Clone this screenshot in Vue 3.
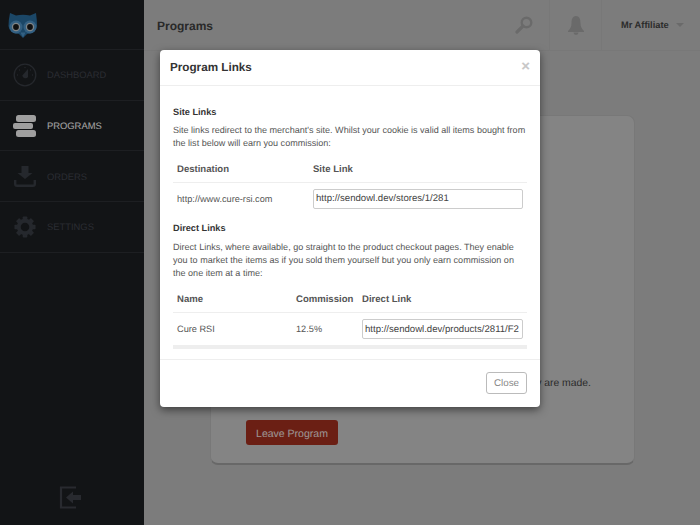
<script setup>
const navItems = [
  { label: 'DASHBOARD', icon: 'gauge' },
  { label: 'PROGRAMS', icon: 'stack', active: true },
  { label: 'ORDERS', icon: 'tray' },
  { label: 'SETTINGS', icon: 'gear' },
]
const teeth = [0, 45, 90, 135, 180, 225, 270, 315]
</script>

<template>
  <div class="page">
    <aside class="sidebar">
      <div class="logo">
        <svg width="30" height="26" viewBox="0 0 30 26">
          <path d="M2 1 L8 3.500 Q15 2 22 3.500 L28 1 Q29 8 29 14 Q28 21 19 22 L15 26 L11 22 Q1 21 .5 14 Q.5 8 2 1Z" fill="#2a6d9e" />
          <circle cx="8" cy="15" r="6.500" fill="#4f94c8" />
          <circle cx="22" cy="15" r="6.500" fill="#4f94c8" />
          <circle cx="8" cy="15" r="4.200" fill="#c4ccd0" />
          <circle cx="22" cy="15" r="4.200" fill="#c4ccd0" />
          <circle cx="8" cy="15" r="2.900" fill="#1a1a1a" />
          <circle cx="22" cy="15" r="2.900" fill="#1a1a1a" />
          <path d="M12.500 20.500 L17.500 20.500 L15 25.500Z" fill="#4f94c8" />
        </svg>
      </div>
      <nav class="nav">
        <a v-for="item in navItems" :key="item.label" class="nav-item" :class="{ active: item.active }">
          <span class="nav-icon">
            <svg v-if="item.icon === 'gauge'" width="24" height="24" viewBox="0 0 24 24">
              <circle cx="12" cy="12" r="10.800" fill="none" stroke="currentColor" stroke-width="1.300" />
              <path d="M15 6 L15 14 A3.200 3.200 0 0 1 9.300 12.500 Z" fill="currentColor" />
              <g fill="currentColor">
                <circle cx="12" cy="4.500" r=".7" /><circle cx="6.500" cy="7" r=".7" /><circle cx="4.500" cy="12" r=".7" /><circle cx="17.500" cy="7" r=".7" /><circle cx="19.500" cy="12" r=".7" />
              </g>
            </svg>
            <svg v-else-if="item.icon === 'stack'" width="24" height="22" viewBox="0 0 24 22">
              <g fill="currentColor">
                <rect x="3" y="0" width="20" height="7" rx="2.500" />
                <rect x="0" y="8" width="20" height="6" rx="2" />
                <rect x="3" y="15" width="20" height="7" rx="2.500" />
              </g>
            </svg>
            <svg v-else-if="item.icon === 'tray'" width="22" height="21" viewBox="0 0 22 21">
              <g fill="currentColor">
                <path d="M7.500 0 H14.500 V7 H18.500 L11 13 L3.500 7 H7.500 Z" />
              </g>
              <path d="M1.200 14 V18 Q1.200 19.800 3 19.800 H19 Q20.800 19.800 20.800 18 V14" fill="none" stroke="currentColor" stroke-width="2.400" />
            </svg>
            <svg v-else width="22" height="22" viewBox="0 0 24 24">
              <g fill="currentColor">
                <rect v-for="a in teeth" :key="a" x="9.500" y=".5" width="5" height="5" rx=".8" :transform="`rotate(${a} 12 12)`" />
              </g>
              <circle cx="12" cy="12" r="6.800" fill="none" stroke="currentColor" stroke-width="4.200" />
            </svg>
          </span>
          <span class="nav-label">{{ item.label }}</span>
        </a>
      </nav>
      <div class="logout">
        <svg width="23" height="23" viewBox="0 0 23 23">
          <path d="M17 1.500 H2 V21.500 H17" fill="none" stroke="#3e4149" stroke-width="2.200" />
          <path d="M7 11.500 L14 5.500 V9 H22 V14 H14 V17.500 Z" fill="#3e4149" />
        </svg>
      </div>
    </aside>

    <main class="main">
      <header class="topbar">
        <h1 class="page-title">Programs</h1>
        <div class="top-cell search-cell">
          <svg width="18" height="18" viewBox="0 0 18 18">
            <circle cx="11.500" cy="6.500" r="4.800" fill="none" stroke="#a4a4a4" stroke-width="2.400" />
            <path d="M8 10 L2 16" stroke="#a4a4a4" stroke-width="3.200" stroke-linecap="round" />
          </svg>
        </div>
        <div class="top-cell bell-cell">
          <svg width="18" height="19" viewBox="0 0 18 19">
            <path d="M9 0 C5 0 4.500 4 4.500 7 C4.500 11 3 13 1 15 V16 H17 V15 C15 13 13.500 11 13.500 7 C13.500 4 13 0 9 0Z" fill="#a4a4a4" />
            <path d="M6.500 16.500 A2.500 2.500 0 0 0 11.500 16.500Z" fill="#a4a4a4" />
          </svg>
        </div>
        <div class="user">Mr Affiliate<span class="caret"></span></div>
      </header>
      <section class="card">
        <p class="card-text">y are made.</p>
        <button class="leave">Leave Program</button>
      </section>
    </main>

    <div class="overlay">
      <div class="modal">
        <div class="modal-head">
          <h3 class="modal-title">Program Links</h3>
          <span class="close-x">×</span>
        </div>
        <div class="modal-body">
          <h4 class="section-title">Site Links</h4>
          <p class="copy">Site links redirect to the merchant's site. Whilst your cookie is valid all items bought from the list below will earn you commission:</p>
          <table class="links site">
            <thead>
              <tr><th class="c-dest">Destination</th><th>Site Link</th></tr>
            </thead>
            <tbody>
              <tr>
                <td>http://www.cure-rsi.com</td>
                <td><input class="link-input" readonly value="http://sendowl.dev/stores/1/281" /></td>
              </tr>
            </tbody>
          </table>
          <h4 class="section-title second">Direct Links</h4>
          <p class="copy second-copy">Direct Links, where available, go straight to the product checkout pages. They enable you to market the items as if you sold them yourself but you only earn commission on the one item at a time:</p>
          <table class="links direct">
            <thead>
              <tr><th class="c-name">Name</th><th class="c-comm">Commission</th><th>Direct Link</th></tr>
            </thead>
            <tbody>
              <tr>
                <td>Cure RSI</td>
                <td>12.5%</td>
                <td><input class="link-input" readonly value="http://sendowl.dev/products/2811/F2" /></td>
              </tr>
            </tbody>
          </table>
          <div class="scrollbar"></div>
        </div>
        <div class="modal-foot">
          <button class="close-btn">Close</button>
        </div>
      </div>
    </div>
  </div>
</template>

<style scoped>
.page {
  position: relative;
  display: flex;
  width: 700px;
  height: 525px;
  overflow: hidden;
  font-family: "Liberation Sans", Arial, sans-serif;
  text-rendering: geometricPrecision;
  background: #bfbfbf;
}
.sidebar {
  width: 144px;
  flex: none;
  display: flex;
  flex-direction: column;
  background: #1d1f22;
}
.logo {
  height: 37px;
  padding: 12px 0 0 8px;
  border-bottom: 1px solid #2d3035;
}
.nav { display: flex; flex-direction: column; }
.nav-item {
  height: 49.700px;
  display: flex;
  align-items: center;
  border-bottom: 1px solid #2d3035;
  color: #393e45;
}
.nav-item .nav-label { color: #41454e; }
.nav-item.active { color: #f4f4f4; }
.nav-item.active .nav-label { color: #fff; }
.nav-icon {
  width: 24px;
  margin-left: 13px;
  display: flex;
  justify-content: center;
}
.nav-label {
  margin-left: 10px;
  font-size: 9.400px;
}
.logout {
  margin-top: auto;
  padding: 0 0 16px 59px;
  height: 23px;
}
.main { flex: 1; display: flex; flex-direction: column; min-width: 0; }
.topbar {
  height: 50px;
  flex: none;
  display: flex;
  align-items: center;
  border-bottom: 1px solid #b8b8b8;
}
.page-title {
  margin: 1px 0 0 13px;
  flex: 1;
  font-size: 12px;
  color: #404040;
}
.top-cell {
  height: 50px;
  width: 52px;
  display: flex;
  align-items: center;
  justify-content: center;
  border-right: 1px solid #b8b8b8;
  box-sizing: border-box;
}
.user {
  width: 98px;
  box-sizing: border-box;
  padding-left: 19px;
  font-size: 9.300px;
  font-weight: 700;
  color: #444;
  display: flex;
  align-items: center;
}
.caret {
  margin-left: 7px;
  border: 4px solid transparent;
  border-top: 4px solid #a4a4a4;
  border-bottom: 0;
}
.card {
  margin: 64px 65px 0 66px;
  height: 350px;
  box-sizing: border-box;
  background: #cbcbcb;
  border: 1px solid #b8b8b8;
  border-bottom: 2px solid #a0a0a0;
  border-radius: 8px;
  display: flex;
  flex-direction: column;
  justify-content: flex-end;
  align-items: flex-end;
  padding: 0 0 18px 35px;
}
.card-text {
  margin: 0 43px 31px 0;
  font-size: 10.400px;
  color: #444;
  white-space: nowrap;
}
.leave {
  align-self: flex-start;
  width: 92px;
  height: 25px;
  padding: 2px 0 0;
  border: 0;
  border-radius: 3px;
  background: #a5301f;
  color: #f0e4e2;
  font: 10.500px "Liberation Sans", Arial, sans-serif;
  text-rendering: geometricPrecision;
}
.overlay {
  position: absolute;
  inset: 0;
  display: flex;
  justify-content: center;
  align-items: flex-start;
  padding-top: 50px;
  background: rgba(0, 0, 0, .35);
}
.modal {
  width: 380px;
  background: #fff;
  border-radius: 4px;
  box-shadow: 0 3px 9px rgba(0, 0, 0, .5);
  color: #555;
  font-size: 9.200px;
}
.modal-head {
  height: 35px;
  display: flex;
  align-items: center;
  justify-content: space-between;
  padding: 0 10px;
  border-bottom: 1px solid #eee;
}
.modal-title {
  margin: 0;
  font-size: 11.700px;
  color: #333;
}
.close-x {
  font-size: 15px;
  font-weight: 700;
  color: #c8c8c8;
  line-height: 1;
  margin-top: -2px;
}
.modal-body { padding: 20px 13px 0; }
.section-title {
  margin: 0;
  font-size: 9.200px;
  line-height: 12px;
  color: #333;
}
.second { margin-top: 7px; }
.copy {
  margin: 6px 0 0;
  line-height: 13px;
  font-size: 9.050px;
}
.second-copy { margin-top: 7px; }
.links {
  width: 100%;
  border-collapse: collapse;
  table-layout: fixed;
  margin-top: 4px;
}
.links th {
  text-align: left;
  height: 29px;
  padding: 3px 0 0 4px;
  box-sizing: border-box;
  font-size: 9.550px;
  color: #555;
  border-bottom: 1px solid #eee;
}
.links.site th { height: 28px; }
.links td { height: 32px; padding: 0 0 0 4px; }
.c-dest { width: 136px; }
.c-name { width: 119px; }
.c-comm { width: 66px; }
.link-input {
  box-sizing: border-box;
  display: block;
  width: 210px;
  height: 20px;
  padding: 0 2px;
  border: 1px solid #ccc;
  border-radius: 2px;
  background: #fff;
  font: 9.600px "Liberation Sans", Arial, sans-serif;
  text-rendering: geometricPrecision;
  color: #444;
  outline: 0;
}
.direct .link-input { width: 161px; }
.scrollbar { height: 4px; background: #eee; }
.modal-foot {
  margin-top: 10px;
  border-top: 1px solid #eee;
  padding: 12px 13px 13px;
  display: flex;
  justify-content: flex-end;
}
.close-btn {
  width: 41px;
  height: 22px;
  padding: 0;
  background: #fff;
  border: 1px solid #bbb;
  border-radius: 3px;
  color: #888;
  font: 9.800px "Liberation Sans", Arial, sans-serif;
  text-rendering: geometricPrecision;
}
</style>
